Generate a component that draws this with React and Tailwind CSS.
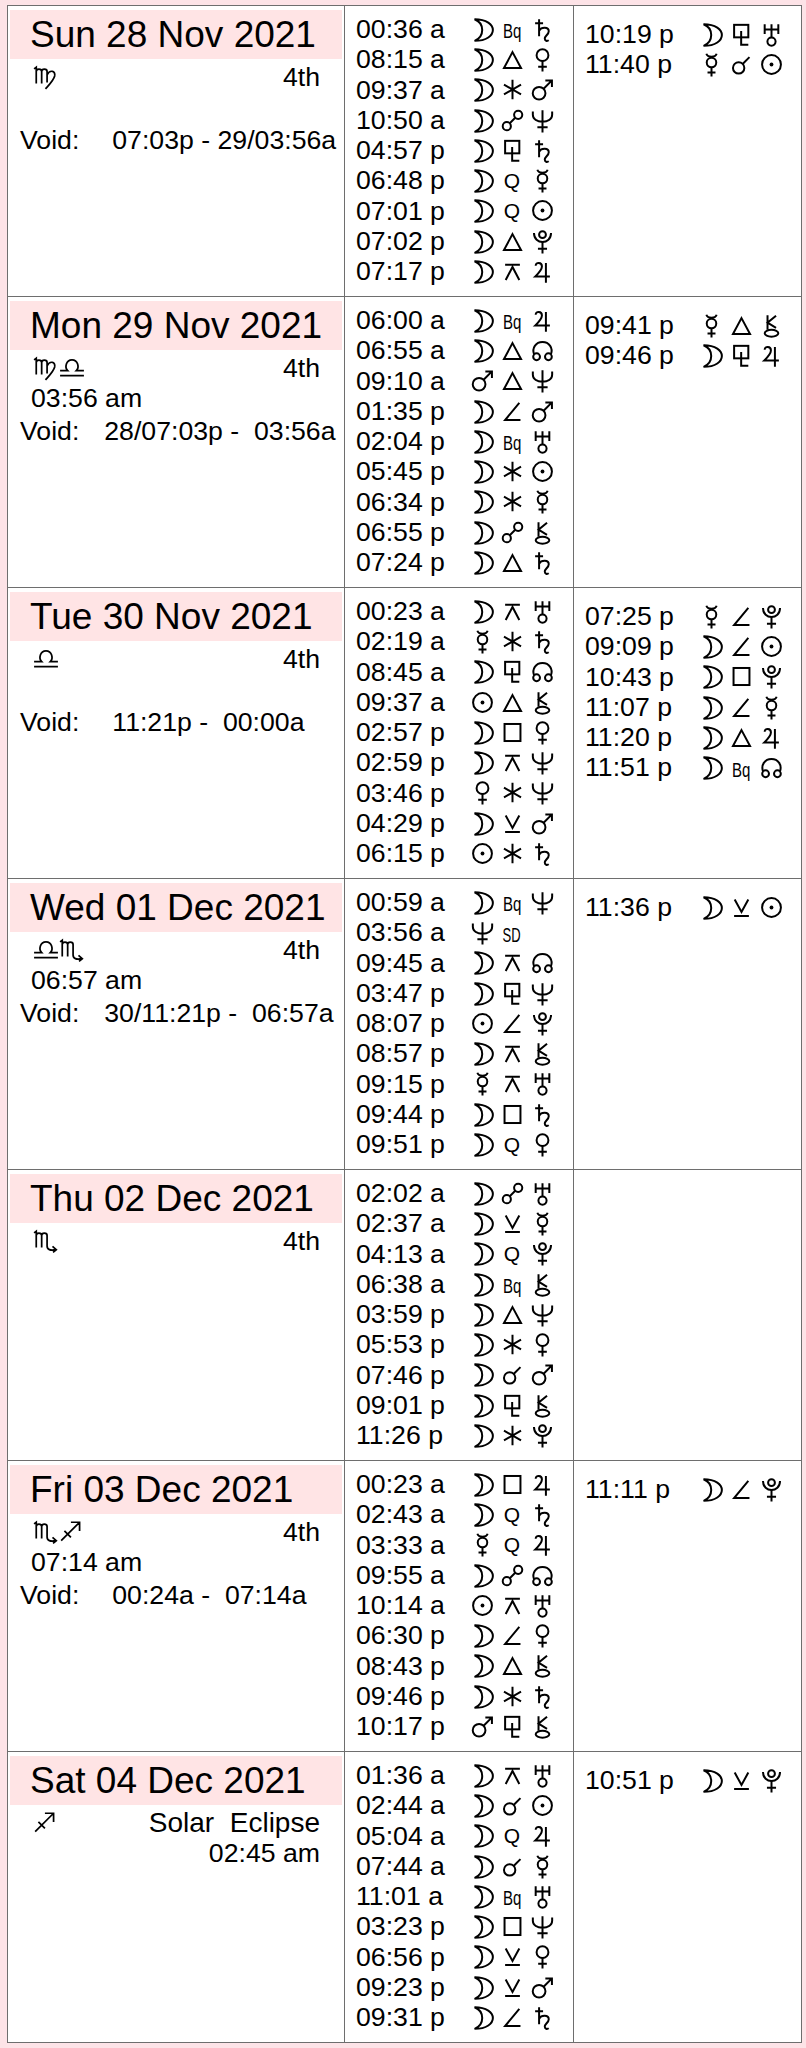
import React from 'react';

// daily aspect table: one row per day, left cell = date / sign / void, then two aspect columns
const DAYS = [
  {
    title: 'Sun 28 Nov 2021',
    signs: ['virgo'],
    phase: '4th',
    blankLine: true,
    voidText: '07:03p - 29/03:56a',
    voidMl: 'ml-[33px]',
    a: [
      ['00:36 a', 'moon', 'Bq', 'saturn'],
      ['08:15 a', 'moon', 'tri', 'venus'],
      ['09:37 a', 'moon', 'sext', 'mars'],
      ['10:50 a', 'moon', 'opp', 'neptune'],
      ['04:57 p', 'moon', 'ssq', 'saturn'],
      ['06:48 p', 'moon', 'Q', 'mercury'],
      ['07:01 p', 'moon', 'Q', 'sun'],
      ['07:02 p', 'moon', 'tri', 'pluto'],
      ['07:17 p', 'moon', 'quinc', 'jupiter'],
    ],
    b: [
      ['10:19 p', 'moon', 'ssq', 'uranus'],
      ['11:40 p', 'mercury', 'conj', 'sun'],
    ],
  },
  {
    title: 'Mon 29 Nov 2021',
    signs: ['virgo', 'libra'],
    phase: '4th',
    ingress: '03:56 am',
    voidText: '28/07:03p -  03:56a',
    voidMl: 'ml-[25px]',
    a: [
      ['06:00 a', 'moon', 'Bq', 'jupiter'],
      ['06:55 a', 'moon', 'tri', 'node'],
      ['09:10 a', 'mars', 'tri', 'neptune'],
      ['01:35 p', 'moon', 'semisq', 'mars'],
      ['02:04 p', 'moon', 'Bq', 'uranus'],
      ['05:45 p', 'moon', 'sext', 'sun'],
      ['06:34 p', 'moon', 'sext', 'mercury'],
      ['06:55 p', 'moon', 'opp', 'chiron'],
      ['07:24 p', 'moon', 'tri', 'saturn'],
    ],
    b: [
      ['09:41 p', 'mercury', 'tri', 'chiron'],
      ['09:46 p', 'moon', 'ssq', 'jupiter'],
    ],
  },
  {
    title: 'Tue 30 Nov 2021',
    signs: ['libra'],
    phase: '4th',
    blankLine: true,
    voidText: '11:21p -  00:00a',
    voidMl: 'ml-[33px]',
    a: [
      ['00:23 a', 'moon', 'quinc', 'uranus'],
      ['02:19 a', 'mercury', 'sext', 'saturn'],
      ['08:45 a', 'moon', 'ssq', 'node'],
      ['09:37 a', 'sun', 'tri', 'chiron'],
      ['02:57 p', 'moon', 'sq', 'venus'],
      ['02:59 p', 'moon', 'quinc', 'neptune'],
      ['03:46 p', 'venus', 'sext', 'neptune'],
      ['04:29 p', 'moon', 'semisext', 'mars'],
      ['06:15 p', 'sun', 'sext', 'saturn'],
    ],
    b: [
      ['07:25 p', 'mercury', 'semisq', 'pluto'],
      ['09:09 p', 'moon', 'semisq', 'sun'],
      ['10:43 p', 'moon', 'sq', 'pluto'],
      ['11:07 p', 'moon', 'semisq', 'mercury'],
      ['11:20 p', 'moon', 'tri', 'jupiter'],
      ['11:51 p', 'moon', 'Bq', 'node'],
    ],
  },
  {
    title: 'Wed 01 Dec 2021',
    signs: ['libra', 'scorpio'],
    phase: '4th',
    ingress: '06:57 am',
    voidText: '30/11:21p -  06:57a',
    voidMl: 'ml-[25px]',
    a: [
      ['00:59 a', 'moon', 'Bq', 'neptune'],
      ['03:56 a', 'neptune', 'SD', null],
      ['09:45 a', 'moon', 'quinc', 'node'],
      ['03:47 p', 'moon', 'ssq', 'neptune'],
      ['08:07 p', 'sun', 'semisq', 'pluto'],
      ['08:57 p', 'moon', 'quinc', 'chiron'],
      ['09:15 p', 'mercury', 'quinc', 'uranus'],
      ['09:44 p', 'moon', 'sq', 'saturn'],
      ['09:51 p', 'moon', 'Q', 'venus'],
    ],
    b: [['11:36 p', 'moon', 'semisext', 'sun']],
  },
  {
    title: 'Thu 02 Dec 2021',
    signs: ['scorpio'],
    phase: '4th',
    a: [
      ['02:02 a', 'moon', 'opp', 'uranus'],
      ['02:37 a', 'moon', 'semisext', 'mercury'],
      ['04:13 a', 'moon', 'Q', 'pluto'],
      ['06:38 a', 'moon', 'Bq', 'chiron'],
      ['03:59 p', 'moon', 'tri', 'neptune'],
      ['05:53 p', 'moon', 'sext', 'venus'],
      ['07:46 p', 'moon', 'conj', 'mars'],
      ['09:01 p', 'moon', 'ssq', 'chiron'],
      ['11:26 p', 'moon', 'sext', 'pluto'],
    ],
    b: [],
  },
  {
    title: 'Fri 03 Dec 2021',
    signs: ['scorpio', 'sagittarius'],
    phase: '4th',
    ingress: '07:14 am',
    voidText: '00:24a -  07:14a',
    voidMl: 'ml-[33px]',
    a: [
      ['00:23 a', 'moon', 'sq', 'jupiter'],
      ['02:43 a', 'moon', 'Q', 'saturn'],
      ['03:33 a', 'mercury', 'Q', 'jupiter'],
      ['09:55 a', 'moon', 'opp', 'node'],
      ['10:14 a', 'sun', 'quinc', 'uranus'],
      ['06:30 p', 'moon', 'semisq', 'venus'],
      ['08:43 p', 'moon', 'tri', 'chiron'],
      ['09:46 p', 'moon', 'sext', 'saturn'],
      ['10:17 p', 'mars', 'ssq', 'chiron'],
    ],
    b: [['11:11 p', 'moon', 'semisq', 'pluto']],
  },
  {
    title: 'Sat 04 Dec 2021',
    signs: ['sagittarius'],
    phase: 'Solar  Eclipse',
    phaseClass: 'whitespace-pre text-[28px]',
    eclipseTime: '02:45 am',
    a: [
      ['01:36 a', 'moon', 'quinc', 'uranus'],
      ['02:44 a', 'moon', 'conj', 'sun'],
      ['05:04 a', 'moon', 'Q', 'jupiter'],
      ['07:44 a', 'moon', 'conj', 'mercury'],
      ['11:01 a', 'moon', 'Bq', 'uranus'],
      ['03:23 p', 'moon', 'sq', 'neptune'],
      ['06:56 p', 'moon', 'semisext', 'venus'],
      ['09:23 p', 'moon', 'semisext', 'mars'],
      ['09:31 p', 'moon', 'semisq', 'saturn'],
    ],
    b: [['10:51 p', 'moon', 'semisext', 'pluto']],
  },
];

// stroke drawings of planets and aspects, 22-unit box
const GLYPHS = {
  moon: <path d="M4 2C25.5 2 25.5 21 4 21C13 17.5 13 5.5 4 2Z" />,
  sun: (
    <>
      <circle cx="11" cy="11" r="8.3" />
      <circle cx="11" cy="11" r="1.7" fill="currentColor" stroke="none" />
    </>
  ),
  mercury: (
    <>
      <path d="M6.5 1.5C7.5 5 14.5 5 15.5 1.5" />
      <circle cx="11" cy="9.3" r="4.2" />
      <path d="M11 13.5V21.5M7.5 18H14.5" />
    </>
  ),
  venus: (
    <>
      <circle cx="11" cy="7.2" r="5.2" />
      <path d="M11 12.4V21.5M7.2 17.4H14.8" />
    </>
  ),
  mars: (
    <>
      <circle cx="8" cy="14.3" r="5.6" />
      <path d="M12 10.3L19.3 3M13.5 3H19.3V8.8" />
    </>
  ),
  jupiter: <path d="M5 6C5 2.5 10.5 2.5 10.5 6.5C10.5 9.5 7.5 12.5 4.5 15.5H17.5M14 3.5V21" />,
  saturn: <path d="M8 2V17M4.5 5.5H11.5M8 12C10 8.5 16.5 8.5 16.5 12.5C16.5 15.5 13 16.5 13 19C13 21 15 21.5 16.5 20.5" />,
  uranus: (
    <>
      <path d="M5 2V10.5M17 2V10.5M5 6.5H17M11 2V13.5" />
      <circle cx="11" cy="17.2" r="3.6" />
    </>
  ),
  neptune: <path d="M2.5 3V6C2.5 10 6.5 12 11 12C15.5 12 19.5 10 19.5 6V3M11 2V21.5M6.5 17H15.5" />,
  pluto: (
    <>
      <path d="M3.5 3.5C3.5 14 18.5 14 18.5 3.5" />
      <circle cx="11" cy="5" r="3" />
      <path d="M11 11.4V21.5M7 17.3H15" />
    </>
  ),
  node: (
    <>
      <circle cx="5.8" cy="16.5" r="3" />
      <circle cx="16.2" cy="16.5" r="3" />
      <path d="M3.6 14.4C1.5 9 5 3.5 11 3.5C17 3.5 20.5 9 18.4 14.4" />
    </>
  ),
  chiron: (
    <>
      <ellipse cx="11" cy="17.8" rx="6" ry="3" />
      <path d="M7.5 14.8V2M15 2.5L7.5 8.5L15 13" />
    </>
  ),
  conj: (
    <>
      <circle cx="8.5" cy="14" r="5" />
      <path d="M12 10.5L18 4.5" />
    </>
  ),
  opp: (
    <>
      <circle cx="6" cy="16" r="3.6" />
      <circle cx="16" cy="6" r="3.6" />
      <path d="M8.6 13.4L13.4 8.6" />
    </>
  ),
  tri: <path d="M11 4.5L18.5 18.5H3.5Z" />,
  sq: <rect x="4" y="3.5" width="14" height="15" />,
  sext: <path d="M11 2.5V19.5M3.5 6.8L18.5 15.2M3.5 15.2L18.5 6.8" />,
  ssq: (
    <>
      <rect x="4.5" y="2.5" width="12.5" height="11" />
      <path d="M10.7 8V20H17" />
    </>
  ),
  semisq: <path d="M17 3.5L4.5 18.5H18" />,
  quinc: <path d="M4.5 5H17.5M5 18.5L11 7L17 18.5" />,
  semisext: <path d="M5 4L11 15L17 4M4.5 18.5H17.5" />,
};

function Glyph({ name }) {
  if (name === 'Bq') {
    return <span className="inline-block scale-x-[0.75] text-[20px] leading-none">Bq</span>;
  }
  if (name === 'SD') {
    return <span className="inline-block scale-x-[0.62] text-[21px] leading-none">SD</span>;
  }
  if (name === 'Q') {
    return <span className="inline-block text-[21px] leading-none">Q</span>;
  }
  return (
    <svg width="25" height="25" viewBox="0 0 22 22" fill="none" stroke="currentColor" strokeWidth="1.75">
      {GLYPHS[name]}
    </svg>
  );
}

// text glyphs sit on the time baseline, drawn ones are centred
const CELL = {
  Bq: 'flex h-full w-[30px] items-end justify-center pb-[3px]',
  SD: 'flex h-full w-[30px] items-end justify-center pb-[3px]',
  Q: 'flex h-full w-[30px] items-end justify-center pb-[5px]',
};

function Sign({ name }) {
  const paths = {
    virgo: 'M1 4.5L3 3V18M3 7C3 4 8 4 8 7V18M8 7C8 4 13 4 13 7V17M13 10C15.5 5 21 6 20 11C19 15 15 19 11.5 23',
    libra: 'M1 19H23M1 14.5H8C5 11.5 6.5 4.5 12 4.5C17.5 4.5 19 11.5 16 14.5H23',
    scorpio: 'M1 4.5L3 3V18M3 7C3 4 8 4 8 7V18M8 7C8 4 13 4 13 7V16.5C13 20 16 21 21 20M18 17L21.5 20L18.5 22.5',
    sagittarius: 'M2 20L19 3M11 3H19V11M5 11L11 17',
  };
  return (
    <svg width="26" height="26" viewBox="0 0 24 24" fill="none" stroke="currentColor" strokeWidth="1.6">
      <path d={paths[name]} />
    </svg>
  );
}

function AspectLine({ row }) {
  const [time, p1, asp, p2] = row;
  return (
    <div className="flex h-[30.3px] items-center">
      <span className="w-[111px] whitespace-pre">{time}</span>
      {[p1, asp, p2].map((g, i) => (
        <span key={i} className={CELL[g] || 'flex h-full w-[30px] items-center justify-center'}>
          {g && <Glyph name={g} />}
        </span>
      ))}
    </div>
  );
}

function DayRow({ day, first }) {
  return (
    <div className={first ? 'flex h-[290px]' : 'flex h-[291px] border-t border-[#6e6e6e]'}>
      {/* date cell */}
      <div className="w-[337px] border-r border-[#6e6e6e]">
        <div className="mx-[2px] mt-[4px] h-[49px] bg-[#ffe4e5] pl-[20px] text-[37px] leading-[49px]">{day.title}</div>
        <div className="mt-[3px] flex h-[30.3px] items-center justify-between pl-[25px] pr-[24px]">
          <div className="flex">
            {day.signs.map((s) => (
              <Sign key={s} name={s} />
            ))}
          </div>
          <span className={day.phaseClass || ''}>{day.phase}</span>
        </div>
        {day.ingress && <div className="h-[30.3px] pl-[23px]">{day.ingress}</div>}
        {day.eclipseTime && <div className="h-[30.3px] pr-[24px] text-right">{day.eclipseTime}</div>}
        {day.blankLine && <div className="h-[30.3px]" />}
        {day.voidText && (
          <div className="mt-[2px] flex h-[30.3px] pl-[12px]">
            <span>Void:</span>
            <span className={`whitespace-pre ${day.voidMl}`}>{day.voidText}</span>
          </div>
        )}
      </div>

      {/* aspects, first column */}
      <div className="w-[229px] border-r border-[#6e6e6e] pl-[11px] pt-[8px]">
        {day.a.map((r, i) => (
          <AspectLine key={i} row={r} />
        ))}
      </div>

      {/* aspects, second column */}
      <div className="flex-1 pl-[11px] pt-[13px]">
        {day.b.map((r, i) => (
          <AspectLine key={i} row={r} />
        ))}
      </div>
    </div>
  );
}

export default function App() {
  return (
    <div className="min-h-[2048px] w-[806px] bg-[#fde3e7] pl-[7px] pt-[5px] font-['Liberation_Sans',Arial,sans-serif] text-[26.67px] leading-[30.3px] text-black">
      <div className="w-[795px] border border-[#6e6e6e] bg-white">
        {DAYS.map((d, i) => (
          <DayRow key={d.title} day={d} first={i === 0} />
        ))}
      </div>
    </div>
  );
}
